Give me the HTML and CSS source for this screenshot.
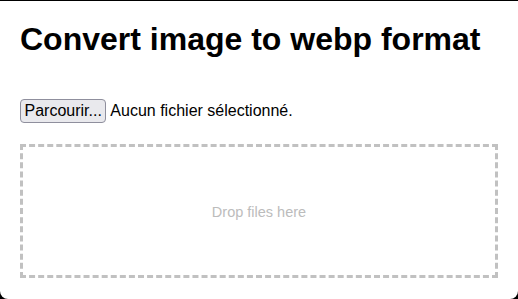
FILE: index.html
```html
<!DOCTYPE html>
<html lang="fr">
<head>
<meta charset="utf-8">
<title>Convert image to webp format</title>
<link rel="stylesheet" href="styles.css">
</head>
<body>
<div class="page">
  <h1 class="title">Convert image to webp format</h1>
  <div class="file-row">
    <button class="file-btn" type="button">Parcourir...</button>
    <span class="file-status">Aucun fichier sélectionné.</span>
  </div>
  <div class="dropzone">Drop files here</div>
</div>
</body>
</html>
```
FILE: styles.css
```css
html, body {
  margin: 0;
  padding: 0;
  background: #000;
}
.page {
  margin-top: 1px;
  height: 298px;
  box-sizing: border-box;
  background: #fff;
  border-radius: 0 0 8px 8px;
  padding: 20px 20px 0 20px;
  font-family: "Liberation Sans", Arial, sans-serif;
  color: #000;
}
.title {
  margin: 0 0 41px 0;
  font-size: 32px;
  font-weight: bold;
  line-height: 37px;
}
.file-row {
  display: flex;
  align-items: center;
  gap: 4px;
  height: 24px;
  font-size: 16px;
}
.file-btn {
  font-family: "Liberation Sans", Arial, sans-serif;
  font-size: 16px;
  height: 24px;
  padding: 0 3.5px;
  background: #e9e9ed;
  border: 1px solid #8f8f9d;
  border-radius: 4px;
  color: #000;
  line-height: 20px;
}
.file-status {
  line-height: 18px;
}
.dropzone {
  margin-top: 21px;
  height: 134px;
  box-sizing: border-box;
  border: 3px dashed #c1c1c1;
  display: flex;
  align-items: center;
  justify-content: center;
  color: #bcbcbc;
  font-size: 14.5px;
  padding-top: 2px;
}
```
